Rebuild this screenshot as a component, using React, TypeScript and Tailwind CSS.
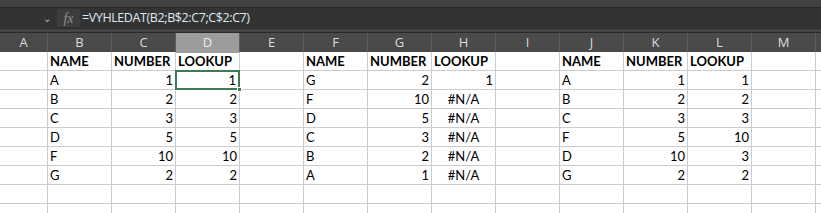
import React from "react";

const cols = ["A", "B", "C", "D", "E", "F", "G", "H", "I", "J", "K", "L", "M", ""];

type Cell = { v: string; align?: "l" | "r" | "c"; bold?: boolean };

const header: Record<number, Cell> = {
  1: { v: "NAME", bold: true },
  2: { v: "NUMBER", bold: true },
  3: { v: "LOOKUP", bold: true },
  5: { v: "NAME", bold: true },
  6: { v: "NUMBER", bold: true },
  7: { v: "LOOKUP", bold: true },
  9: { v: "NAME", bold: true },
  10: { v: "NUMBER", bold: true },
  11: { v: "LOOKUP", bold: true },
};

const left = [["A", "1", "1"], ["B", "2", "2"], ["C", "3", "3"], ["D", "5", "5"], ["F", "10", "10"], ["G", "2", "2"]];
const mid = [["G", "2", "1"], ["F", "10", "#N/A"], ["D", "5", "#N/A"], ["C", "3", "#N/A"], ["B", "2", "#N/A"], ["A", "1", "#N/A"]];
const right = [["A", "1", "1"], ["B", "2", "2"], ["C", "3", "3"], ["F", "5", "10"], ["D", "10", "3"], ["G", "2", "2"]];

function rowCells(i: number): Record<number, Cell> {
  const r: Record<number, Cell> = {};
  const put = (start: number, d: string[]) => {
    r[start] = { v: d[0] };
    r[start + 1] = { v: d[1], align: "r" };
    r[start + 2] = { v: d[2], align: d[2] === "#N/A" ? "c" : "r" };
  };
  put(1, left[i]);
  put(5, mid[i]);
  put(9, right[i]);
  return r;
}

const rows: Record<number, Cell>[] = [header, ...left.map((_, i) => rowCells(i)), {}, {}];

export default function App() {
  return (
    <div className="w-[821px] h-[213px] overflow-hidden bg-white font-['Lato',sans-serif]">
      <div className="h-[8px] bg-[#424242] border-b border-[#2a2a2a]" />
      <div className="h-[21px] bg-[#333333] border-b border-[#2a2a2a] flex items-center">
        <span className="w-[57px] pl-[43px] text-[#b5b5b5] text-[10px] leading-none">⌄</span>
        <div className="w-[23px] h-[18px] bg-[#3d3d3d] flex items-center justify-center text-[#8f8f8f] italic text-[14px] font-['Liberation_Serif',serif]">
          fx
        </div>
        <span className="pl-[2px] text-[12.5px] text-[#dfe8f2] font-['Open_Sans',sans-serif] tracking-[-0.4px]">
          =VYHLEDAT(B2;B$2:C7;C$2:C7)
        </span>
      </div>
      <div className="h-[4px] bg-[#444444] border-b border-[#2a2a2a]" />
      <div className="grid grid-cols-[48px_repeat(13,64px)] h-[19px] bg-[#4a4a4a]">
        {cols.map((c, i) => (
          <div
            key={i}
            className={`border-r border-[#5e5e5e] flex items-center justify-center text-[13px] font-['Open_Sans',sans-serif] ${
              c === "D" ? "bg-[#9c9c9c] text-[#eeeeee]" : "text-[#dcdcdc]"
            }`}
          >
            {c}
          </div>
        ))}
      </div>
      {rows.map((r, ri) => (
        <div key={ri} className="grid grid-cols-[48px_repeat(13,64px)] h-[19px]">
          {cols.map((_, ci) => {
            const cell = r[ci];
            const sel = ri === 1 && ci === 3;
            return (
              <div
                key={ci}
                className={`relative border-r border-b border-[#cccccc] flex items-end px-[2px] text-[13px] leading-[17px] text-black ${
                  cell?.align === "r" ? "justify-end" : cell?.align === "c" ? "justify-center" : "justify-start"
                } ${cell?.bold ? "font-bold" : ""} ${sel ? "z-10 pr-[3px]" : ""}`}
              >
                {cell?.v}
                {sel && (
                  <>
                    <div className="absolute -left-[1px] -top-[1px] -right-[1px] -bottom-[1px] border-2 border-[#3f7a55]" />
                    <div className="absolute -right-[3px] -bottom-[3px] w-[5px] h-[5px] bg-[#3f7a55] border border-white" />
                  </>
                )}
              </div>
            );
          })}
        </div>
      ))}
    </div>
  );
}
